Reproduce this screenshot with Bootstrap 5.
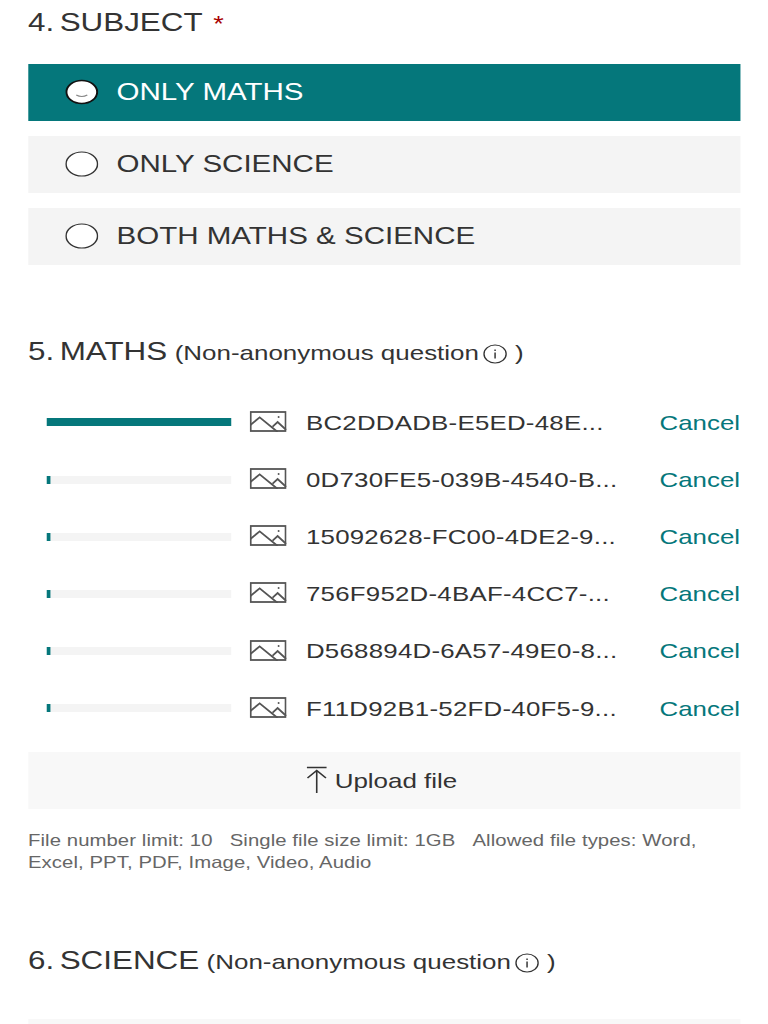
<!DOCTYPE html>
<html lang="en"><head><meta charset="utf-8"><title>Form</title>
<link href="https://cdn.jsdelivr.net/npm/bootstrap@5.3.0/dist/css/bootstrap.min.css" rel="stylesheet">
<style>
html,body{height:1024px;overflow:hidden}
body{font-family:"Liberation Sans",Arial,sans-serif;color:#333;background:#fff}
.sheet{width:624.39px;padding:0 22.76px;transform:scaleX(1.23);transform-origin:0 0}
.q-title{font-size:25.5px;line-height:30px;color:#333;margin:0;font-weight:400;white-space:nowrap}
.q-title .num{margin-right:4.5px}
.q-note{font-size:21.1px;margin-left:-1px}
.star{color:#a80000;font-size:22px;margin-left:2px}
.q4{padding-top:7px}
.opts{margin-top:25px;gap:14.700px}
.opt{height:57.300px;background:#f4f4f4;padding:0 0 1px 30px;gap:15px;font-size:24px;color:#333}
.opt.on{background:#05777b;color:#fff}
.radio-oval{flex:none;display:block}
.q5{margin-top:70.500px}
.files{margin-top:26px}
.frow{height:57.2px;padding-left:14.9px}
.track{width:150.800px;height:8px;background:#f4f4f4;flex:none}
.fill{height:100%;background:#05777b}
.thumb{flex:none;margin:0 0 2px 14.900px}
.fname{font-size:21px;letter-spacing:.2px;margin-left:15.4px;white-space:nowrap;color:#333}
.cancel{margin-left:auto;font-size:21px;color:#05777b;text-decoration:none}
.upload{height:57px;margin-top:15px;padding-right:3.5px;background:#f8f8f8;gap:6px;font-size:21.1px;color:#333}
.limits{margin:20.500px 0 0;font-size:16.5px;line-height:22px;letter-spacing:.07px;color:#666}
.q6{margin-top:71.500px}
.next{height:20px;margin-top:42px;background:#f8f8f8}
.info{vertical-align:-4px;margin-left:2.5px}
</style></head><body>
<div class="sheet">
<section class="q4">
<h2 class="q-title"><span class="num">4.</span>SUBJECT <span class="star">*</span></h2>
<div class="opts d-flex flex-column">
<div class="opt on d-flex align-items-center"><svg class="radio-oval" width="27" height="26" viewBox="0 0 27 26"><ellipse cx="13.500" cy="13" rx="12.500" ry="11.500" fill="#fff" stroke="#111" stroke-width="1.600"/><path d="M9 16q4.500 3 9 0" fill="none" stroke="#888" stroke-width="1"/></svg><span>ONLY MATHS</span></div>
<div class="opt d-flex align-items-center"><svg class="radio-oval" width="27" height="26" viewBox="0 0 27 26"><ellipse cx="13.500" cy="13" rx="12.800" ry="12" fill="#fff" stroke="#333" stroke-width="1.200"/></svg><span>ONLY SCIENCE</span></div>
<div class="opt d-flex align-items-center"><svg class="radio-oval" width="27" height="26" viewBox="0 0 27 26"><ellipse cx="13.500" cy="13" rx="12.800" ry="12" fill="#fff" stroke="#333" stroke-width="1.200"/></svg><span>BOTH MATHS &amp; SCIENCE</span></div>
</div></section>
<section class="q5">
<h2 class="q-title"><span class="num">5.</span>MATHS <span class="q-note">(Non-anonymous question<svg class="info" width="21" height="20" viewBox="0 0 21 20"><circle cx="10.500" cy="10" r="9" fill="none" stroke="#333" stroke-width="1.100"/><path d="M10.500 8.500v6M10.500 5.500v1.500" stroke="#333" stroke-width="1.200"/></svg> )</span></h2>
<div class="files">
<div class="frow d-flex align-items-center"><div class="track"><div class="fill" style="width:100%"></div></div><svg class="thumb" width="30" height="21" viewBox="0 0 37 21" preserveAspectRatio="none"><g fill="none" stroke="#555" stroke-width="1.800"><rect x="1" y="1" width="35" height="19"/><path d="M.7 14 10 6.300 28 21M23 15.700 28 11l8.700 8"/></g><circle cx="29" cy="6" r="1" fill="#555"/></svg><span class="fname">BC2DDADB-E5ED-48E...</span><a class="cancel" href="#">Cancel</a></div>
<div class="frow d-flex align-items-center"><div class="track"><div class="fill" style="width:2.5%"></div></div><svg class="thumb" width="30" height="21" viewBox="0 0 37 21" preserveAspectRatio="none"><g fill="none" stroke="#555" stroke-width="1.800"><rect x="1" y="1" width="35" height="19"/><path d="M.7 14 10 6.300 28 21M23 15.700 28 11l8.700 8"/></g><circle cx="29" cy="6" r="1" fill="#555"/></svg><span class="fname">0D730FE5-039B-4540-B...</span><a class="cancel" href="#">Cancel</a></div>
<div class="frow d-flex align-items-center"><div class="track"><div class="fill" style="width:2.5%"></div></div><svg class="thumb" width="30" height="21" viewBox="0 0 37 21" preserveAspectRatio="none"><g fill="none" stroke="#555" stroke-width="1.800"><rect x="1" y="1" width="35" height="19"/><path d="M.7 14 10 6.300 28 21M23 15.700 28 11l8.700 8"/></g><circle cx="29" cy="6" r="1" fill="#555"/></svg><span class="fname">15092628-FC00-4DE2-9...</span><a class="cancel" href="#">Cancel</a></div>
<div class="frow d-flex align-items-center"><div class="track"><div class="fill" style="width:2.5%"></div></div><svg class="thumb" width="30" height="21" viewBox="0 0 37 21" preserveAspectRatio="none"><g fill="none" stroke="#555" stroke-width="1.800"><rect x="1" y="1" width="35" height="19"/><path d="M.7 14 10 6.300 28 21M23 15.700 28 11l8.700 8"/></g><circle cx="29" cy="6" r="1" fill="#555"/></svg><span class="fname">756F952D-4BAF-4CC7-...</span><a class="cancel" href="#">Cancel</a></div>
<div class="frow d-flex align-items-center"><div class="track"><div class="fill" style="width:2.5%"></div></div><svg class="thumb" width="30" height="21" viewBox="0 0 37 21" preserveAspectRatio="none"><g fill="none" stroke="#555" stroke-width="1.800"><rect x="1" y="1" width="35" height="19"/><path d="M.7 14 10 6.300 28 21M23 15.700 28 11l8.700 8"/></g><circle cx="29" cy="6" r="1" fill="#555"/></svg><span class="fname">D568894D-6A57-49E0-8...</span><a class="cancel" href="#">Cancel</a></div>
<div class="frow d-flex align-items-center"><div class="track"><div class="fill" style="width:2.5%"></div></div><svg class="thumb" width="30" height="21" viewBox="0 0 37 21" preserveAspectRatio="none"><g fill="none" stroke="#555" stroke-width="1.800"><rect x="1" y="1" width="35" height="19"/><path d="M.7 14 10 6.300 28 21M23 15.700 28 11l8.700 8"/></g><circle cx="29" cy="6" r="1" fill="#555"/></svg><span class="fname">F11D92B1-52FD-40F5-9...</span><a class="cancel" href="#">Cancel</a></div>
</div>
<div class="upload d-flex align-items-center justify-content-center"><svg width="17" height="28" viewBox="0 0 17 28"><path d="M.5 1.500h16M8.500 27V4M1 12l7.500-7.500L16 12" fill="none" stroke="#333" stroke-width="1.300"/></svg><span>Upload file</span></div>
<p class="limits">File number limit: 10&nbsp;&nbsp;&nbsp;Single file size limit: 1GB&nbsp;&nbsp;&nbsp;Allowed file types: Word, Excel, PPT, PDF, Image, Video, Audio</p>
</section>
<section class="q6">
<h2 class="q-title"><span class="num">6.</span>SCIENCE <span class="q-note">(Non-anonymous question<svg class="info" width="21" height="20" viewBox="0 0 21 20"><circle cx="10.500" cy="10" r="9" fill="none" stroke="#333" stroke-width="1.100"/><path d="M10.500 8.500v6M10.500 5.500v1.500" stroke="#333" stroke-width="1.200"/></svg> )</span></h2>
<div class="next"></div>
</section>
</div>
<script src="https://cdn.jsdelivr.net/npm/bootstrap@5.3.0/dist/js/bootstrap.bundle.min.js"></script>
</body></html>
